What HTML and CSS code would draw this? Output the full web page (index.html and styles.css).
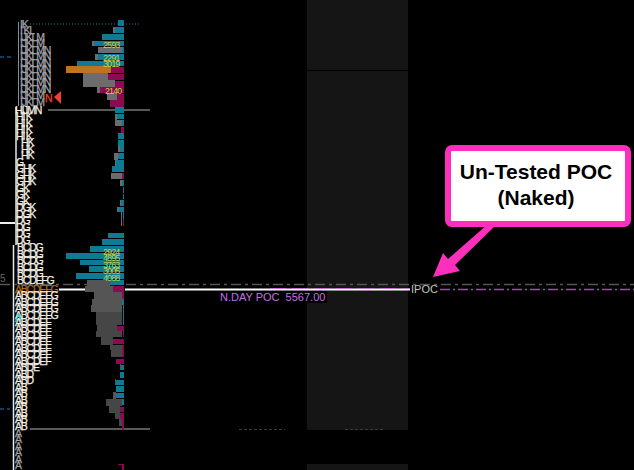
FILE: index.html
```html
<!DOCTYPE html>
<html lang="en">
<head>
<meta charset="utf-8">
<title>Un-Tested POC</title>
<link rel="stylesheet" href="styles.css">
</head>
<body>
<main class="chart">
<svg class="plot" width="634" height="470" viewBox="0 0 634 470">
  <!-- session panels -->
  <rect class="panel" x="307" y="0" width="101" height="70"/>
  <rect class="panel" x="307" y="71" width="101" height="359"/>
  <rect class="panel" x="307" y="464" width="101" height="6"/>

  <!-- reference lines -->
  <line class="dotted" x1="30" y1="24" x2="140" y2="24"/>
  <line class="rule" x1="48" y1="110" x2="150" y2="110"/>
  <line class="rule" x1="30" y1="429" x2="150" y2="429"/>
  <line class="faint" x1="239" y1="429.5" x2="285" y2="429.5"/>
  <line class="faint" x1="345" y1="429.5" x2="385" y2="429.5"/>
  <line class="tick-blue" x1="0" y1="57" x2="14" y2="57"/>
  <line class="tick-blue" x1="0" y1="409" x2="10" y2="409"/>
  <line class="tick-white" x1="0" y1="223" x2="15" y2="223"/>
  <line class="spine" x1="16" y1="107" x2="16" y2="245"/>
  <line class="spine" x1="13.5" y1="245" x2="13.5" y2="470"/>
  <line class="spine-dim" x1="18.5" y1="22" x2="18.5" y2="106"/>
  <line class="dash-gray" x1="0" y1="284.5" x2="634" y2="284.5"/>
  <line class="poc" x1="59" y1="289.5" x2="113" y2="289.5"/>
  <line class="poc" x1="125" y1="289.5" x2="410" y2="289.5"/>
  <line class="poc-pink" x1="270" y1="288.5" x2="410" y2="288.5"/>
  <line class="dash-pink" x1="440" y1="289.5" x2="634" y2="289.5"/>

  <!-- volume profile: top -->
  <rect class="t" x="118" y="20" width="6" height="6"/>
  <rect class="g" x="113" y="27" width="2" height="6"/><rect class="t" x="115" y="27" width="9" height="6"/>
  <rect class="t" x="102" y="34" width="22" height="6"/>
  <rect class="g" x="92" y="41" width="2" height="5"/><rect class="t" x="94" y="41" width="30" height="5"/>
  <rect class="g" x="98" y="47" width="24" height="6"/><rect class="t" x="122" y="47" width="2" height="6"/>
  <rect class="g" x="95" y="54" width="3" height="6"/><rect class="t" x="98" y="54" width="26" height="6"/>
  <rect class="t" x="77" y="61" width="47" height="5"/>
  <rect class="o" x="66" y="66" width="45" height="7"/><rect class="c" x="111" y="67" width="13" height="6"/>
  <rect class="g" x="83" y="73" width="25" height="7"/><rect class="c" x="108" y="74" width="16" height="6"/>
  <rect class="g" x="83" y="80" width="32" height="7"/><rect class="c" x="115" y="81" width="9" height="6"/>
  <rect class="g" x="97" y="87" width="3" height="6"/><rect class="c" x="100" y="87" width="24" height="6"/>
  <rect class="g" x="107" y="93" width="10" height="7"/><rect class="c" x="117" y="94" width="7" height="6"/>
  <rect class="c" x="110" y="100" width="14" height="7"/>
  <rect class="t" x="115" y="107" width="9" height="6"/>
  <rect class="g" x="115" y="114" width="2" height="6"/><rect class="t" x="117" y="114" width="7" height="5"/>
  <rect class="g" x="115" y="120" width="7" height="6"/><rect class="t" x="122" y="120" width="2" height="6"/>
  <rect class="c" x="121" y="127" width="3" height="6"/>
  <rect class="t" x="118" y="133" width="6" height="6"/>
  <rect class="t" x="118" y="140" width="6" height="6"/>
  <rect class="g" x="118" y="146" width="2" height="6"/><rect class="t" x="120" y="146" width="4" height="6"/>
  <rect class="g" x="114" y="153" width="4" height="7"/><rect class="t" x="118" y="153" width="6" height="6"/>
  <rect class="g" x="115" y="160" width="1" height="6"/><rect class="t" x="116" y="160" width="8" height="6"/>
  <rect class="t" x="112" y="166" width="12" height="6"/>
  <rect class="g" x="111" y="173" width="11" height="6"/><rect class="c" x="122" y="173" width="2" height="6"/>
  <rect class="g" x="120" y="180" width="2" height="6"/><rect class="t" x="122" y="180" width="2" height="6"/>
  <rect class="t" x="123" y="187" width="1" height="6"/>
  <rect class="t" x="123" y="194" width="1" height="5"/>
  <rect class="g" x="120" y="200" width="1" height="6"/><rect class="t" x="121" y="200" width="3" height="6"/>
  <rect class="g" x="117" y="207" width="1" height="5"/><rect class="t" x="118" y="207" width="6" height="5"/>
  <rect class="g" x="121" y="212" width="1" height="7"/><rect class="t" x="123" y="212" width="1" height="7"/>
  <rect class="g" x="121" y="219" width="1" height="7"/><rect class="c" x="123" y="219" width="1" height="7"/>

  <!-- volume profile: bottom -->
  <rect class="t" x="108" y="233" width="16" height="5"/>
  <rect class="t" x="102" y="239" width="22" height="6"/>
  <rect class="t" x="90" y="246" width="34" height="6"/>
  <rect class="t" x="66" y="253" width="58" height="6"/>
  <rect class="t" x="80" y="260" width="44" height="5"/>
  <rect class="t" x="89" y="266" width="35" height="6"/>
  <rect class="t" x="76" y="273" width="48" height="6"/>
  <rect class="d" x="87" y="280" width="23" height="6"/><rect class="t" x="110" y="280" width="14" height="5"/>
  <rect class="d" x="85" y="286" width="28" height="6"/><rect class="c" x="113" y="286" width="11" height="6"/>
  <rect class="d" x="94" y="292" width="28" height="7"/><rect class="c" x="122" y="292" width="2" height="7"/>
  <rect class="d" x="92" y="299" width="30" height="6"/><rect class="t" x="122" y="299" width="2" height="6"/>
  <rect class="d" x="91" y="305" width="31" height="7"/><rect class="t" x="123" y="305" width="1" height="7"/>
  <rect class="e" x="96" y="312" width="26" height="6"/><rect class="t" x="123" y="312" width="1" height="6"/>
  <rect class="e" x="96" y="318" width="26" height="7"/><rect class="t" x="123" y="318" width="1" height="7"/>
  <rect class="e" x="97" y="325" width="20" height="6"/><rect class="c" x="117" y="326" width="7" height="5"/>
  <rect class="e" x="96" y="331" width="26" height="6"/><rect class="c" x="123" y="331" width="1" height="6"/>
  <rect class="e" x="101" y="337" width="12" height="8"/><rect class="c" x="113" y="339" width="11" height="5"/>
  <rect class="e" x="110" y="345" width="12" height="5"/><rect class="c" x="122" y="345" width="2" height="5"/>
  <rect class="e" x="111" y="350" width="11" height="7"/><rect class="c" x="122" y="350" width="2" height="7"/>
  <rect class="c" x="116" y="359" width="8" height="5"/>
  <rect class="d" x="120" y="364" width="1" height="6"/><rect class="t" x="121" y="365" width="3" height="5"/>
  <rect class="t" x="120" y="372" width="4" height="6"/>
  <rect class="d" x="115" y="379" width="1" height="6"/><rect class="t" x="116" y="380" width="8" height="5"/>
  <rect class="t" x="116" y="386" width="8" height="6"/>
  <rect class="d" x="113" y="392" width="3" height="7"/><rect class="t" x="116" y="393" width="8" height="5"/>
  <rect class="e" x="106" y="399" width="16" height="7"/><rect class="t" x="122" y="399" width="2" height="6"/>
  <rect class="e" x="109" y="406" width="11" height="7"/><rect class="c" x="120" y="407" width="4" height="5"/>
  <rect class="e" x="115" y="413" width="5" height="6"/><rect class="c" x="120" y="413" width="4" height="6"/>
  <rect class="e" x="119" y="419" width="3" height="7"/><rect class="c" x="122" y="419" width="2" height="7"/>
  <rect class="c" x="122" y="426" width="2" height="4"/>
  <rect class="c" x="122" y="464" width="2" height="6"/><rect class="c" x="118" y="464" width="6" height="1"/>

  <!-- volume labels -->
  <text class="vol" x="103" y="48">2593</text>
  <text class="vol" x="103" y="61">2291</text>
  <text class="vol" x="103" y="67">3019</text>
  <text class="vol" x="105" y="94">2140</text>
  <text class="vol" x="103" y="255">2924</text>
  <text class="vol" x="103" y="261">4895</text>
  <text class="vol" x="103" y="268">3763</text>
  <text class="vol" x="103" y="274">3005</text>
  <text class="vol" x="103" y="281">4088</text>

  <!-- TPO letters: top -->
  <text class="tpo-dim" x="20" y="28">IK</text>
  <text class="tpo-dim" x="20" y="34">I KL</text>
  <text class="tpo-dim" x="20" y="41">IJKLM</text>
  <text class="tpo-dim" x="20" y="47">IJKLM</text>
  <text class="tpo-dim" x="20" y="54">IJKLMN</text>
  <text class="tpo-dim" x="20" y="60">IJKLMN</text>
  <text class="tpo-dim" x="20" y="67">IJKLMN</text>
  <text class="tpo-dim" x="20" y="73">IJKLMN</text>
  <text class="tpo-dim" x="20" y="80">IJKLMN</text>
  <text class="tpo-dim" x="20" y="86">IJKLMN</text>
  <text class="tpo-dim" x="20" y="93">IJKLMN</text>
  <text class="tpo-dim" x="20" y="99">IJKLM</text>
  <text class="tpo-red" x="45" y="102">N</text>
  <polygon class="marker" points="54,97 61,91 61,104"/>
  <text class="tpo-dim" x="20" y="106">IJKLM</text>

  <!-- TPO letters: middle -->
  <text class="tpo" x="15" y="114">HIJMN</text>
  <text class="tpo" x="16" y="120">HI K</text>
  <text class="tpo" x="16" y="127">HI K</text>
  <text class="tpo" x="16" y="133">HI K</text>
  <text class="tpo" x="16" y="140">HI K</text>
  <text class="tpo" x="21" y="146">HK</text>
  <text class="tpo" x="21" y="153">HK</text>
  <text class="tpo" x="21" y="159">HK</text>
  <text class="tpo" x="16" y="166">G</text>
  <text class="tpo" x="16" y="172">GHK</text>
  <text class="tpo" x="16" y="179">GHK</text>
  <text class="tpo" x="16" y="185">GHK</text>
  <text class="tpo" x="16" y="192">GK</text>
  <text class="tpo" x="16" y="198">GK</text>
  <text class="tpo" x="16" y="205">GK</text>
  <text class="tpo" x="16" y="211">DGK</text>
  <text class="tpo" x="16" y="218">DGK</text>
  <text class="tpo" x="16" y="224">DG</text>
  <text class="tpo" x="16" y="231">DG</text>
  <text class="tpo" x="16" y="237">DG</text>
  <text class="tpo" x="16" y="244">DG</text>

  <!-- TPO letters: bottom -->
  <text class="tpo" x="17" y="251">BCDG</text>
  <text class="tpo" x="17" y="258">BCDG</text>
  <text class="tpo" x="17" y="264">BCDG</text>
  <text class="tpo" x="17" y="271">BCDG</text>
  <text class="tpo" x="17" y="277">BCDG</text>
  <text class="tpo" x="17" y="284">BCDEFG</text>
  <text class="tpo-poc" x="15" y="293">ABCDEFG</text>
  <text class="tpo" x="15" y="299">ABCDEFG</text>
  <text class="tpo" x="15" y="306">ABCDEFG</text>
  <text class="tpo" x="15" y="312">ABCDEFG</text>
  <text class="tpo" x="15" y="319">ABCDEFG</text>
  <text class="tpo-open" x="15" y="322">A</text>
  <text class="tpo" x="15" y="326">ABCDEF</text>
  <text class="tpo" x="15" y="332">ABCDEF</text>
  <text class="tpo" x="15" y="339">ABCDEF</text>
  <text class="tpo" x="15" y="345">ABCDEF</text>
  <text class="tpo" x="15" y="352">ABCDEF</text>
  <text class="tpo" x="15" y="358">ABCDEF</text>
  <text class="tpo" x="15" y="365">ABCDEF</text>
  <text class="tpo" x="15" y="371">ABDE</text>
  <text class="tpo" x="15" y="378">ABD</text>
  <text class="tpo" x="15" y="384">ABD</text>
  <text class="tpo" x="15" y="391">AB</text>
  <text class="tpo" x="15" y="397">AB</text>
  <text class="tpo" x="15" y="404">AB</text>
  <text class="tpo" x="15" y="410">AB</text>
  <text class="tpo" x="15" y="417">AB</text>
  <text class="tpo" x="15" y="423">AB</text>
  <text class="tpo" x="15" y="430">AB</text>
  <text class="tpo-dim" x="15" y="437">A</text>
  <text class="tpo-dim" x="15" y="443">A</text>
  <text class="tpo-dim" x="15" y="450">A</text>
  <text class="tpo-dim" x="15" y="456">A</text>
  <text class="tpo-dim" x="15" y="463">A</text>
  <text class="tpo-dim" x="15" y="469">A</text>

  <!-- chart labels -->
  <text class="axis" x="0" y="282">5</text>
  <rect class="label-bg" x="220" y="291" width="107" height="12"/>
  <text class="nday" x="220" y="301">N.DAY POC  5567.00</text>
  <text class="ipoc" x="411" y="293">IPOC</text>

  <!-- callout arrow -->
  <polygon class="arrow" points="488,224 497,224 455,265 460,271 433,277 443,253 448,259"/>
</svg>
<aside class="callout">Un-Tested POC<br>(Naked)</aside>
</main>
</body>
</html>
```
FILE: styles.css
```css
html, body {
  margin: 0;
  padding: 0;
  background: #000;
}

.chart {
  position: relative;
  width: 634px;
  height: 470px;
  overflow: hidden;
  background: #000;
}

.plot {
  display: block;
}

.panel { fill: #151515; }

.dotted { stroke: #14808f; stroke-width: 1; stroke-dasharray: 1 2; }
.rule { stroke: #777; stroke-width: 1.5; }
.faint { stroke: #3c3c3c; stroke-width: 1; stroke-dasharray: 3 2; }
.tick-blue { stroke: #1f7fc0; stroke-width: 1; stroke-dasharray: 4 3; }
.tick-white { stroke: #eee; stroke-width: 2; }
.spine { stroke: #e8e8e8; stroke-width: 1.5; }
.spine-dim { stroke: #8a8a8a; stroke-width: 1; }
.dash-gray { stroke: #555; stroke-width: 1.5; stroke-dasharray: 10 4 3 4; }
.poc { stroke: #fff; stroke-width: 2; }
.poc-pink { stroke: #c86fd8; stroke-width: 1; stroke-dasharray: 16 6; }
.dash-pink { stroke: #a8489f; stroke-width: 1.5; stroke-dasharray: 10 3 2 3; }

.t { fill: #0f7a94; }
.g { fill: #6c6c6c; }
.d { fill: #555; }
.e { fill: #464646; }
.c { fill: #8c0a52; }
.o { fill: #bd7420; }

.vol {
  font: 9px "Liberation Sans", Arial, sans-serif;
  letter-spacing: -0.9px;
  fill: #c4d23e;
}

.tpo, .tpo-dim, .tpo-poc, .tpo-open, .tpo-red {
  font: 10.5px "Liberation Sans", Arial, sans-serif;
  letter-spacing: -1.2px;
  stroke-width: 0.25px;
}
.tpo { fill: #f4f0e6; stroke: #f4f0e6; }
.tpo-dim { fill: #a4a4aa; stroke: #a4a4aa; }
.tpo-poc { fill: #b8681a; stroke: #b8681a; }
.tpo-open { fill: #19d6d6; stroke: #19d6d6; }
.tpo-red { fill: #f04030; stroke: #f04030; }
.marker { fill: #f04030; }

.axis {
  font: 10px "Liberation Sans", Arial, sans-serif;
  fill: #666;
}

.label-bg { fill: #000; }

.nday {
  font: 11px "Liberation Sans", Arial, sans-serif;
  fill: #c070e8;
  white-space: pre;
}

.ipoc {
  font: 11px "Liberation Sans", Arial, sans-serif;
  fill: #c8c0c0;
}

.arrow { fill: #ff2fbe; }

.callout {
  position: absolute;
  left: 445px;
  top: 145px;
  box-sizing: border-box;
  width: 186px;
  height: 82px;
  padding: 0 4px 2px 0;
  display: flex;
  align-items: center;
  justify-content: center;
  text-align: center;
  background: #fff;
  border: 6px solid #ff2fbe;
  border-radius: 7px;
  color: #000;
  font: bold 21px/26px "Liberation Sans", Arial, sans-serif;
}
```
